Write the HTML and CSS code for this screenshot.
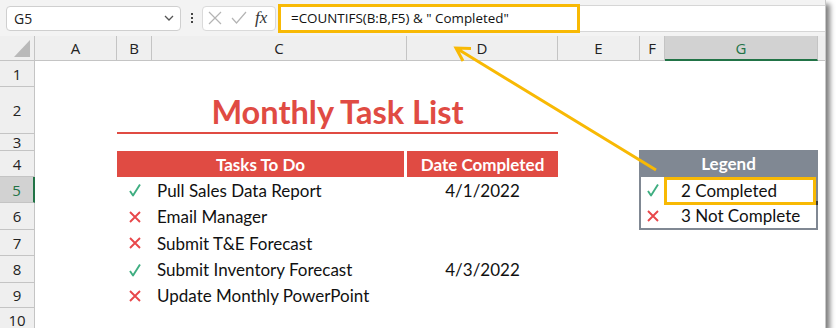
FILE: index.html
```html
<!DOCTYPE html>
<html lang="en">
<head>
  <meta charset="UTF-8">
  <title>Monthly Task List</title>
  <link rel="stylesheet" href="styles.css">
</head>
<body>
  <div class="window">
    <!-- formula bar -->
    <div class="formula-bar">
      <div class="name-box">
        <span>G5</span>
        <svg class="chevron" viewBox="0 0 10 6"><path d="M1 1 L5 5 L9 1"/></svg>
      </div>
      <div class="bar-dots"><i></i><i></i><i></i></div>
      <div class="fx-box">
        <svg class="ui-icon" viewBox="0 0 14 14"><path d="M1 1 L13 13 M13 1 L1 13"/></svg>
        <svg class="ui-icon" viewBox="0 0 16 14"><path d="M1 7 L5.5 12 L15 1"/></svg>
        <span class="fx">fx</span>
      </div>
      <div class="formula">
        <div class="formula-text">=COUNTIFS(B:B,F5) &amp; " Completed"</div>
      </div>
    </div>

    <!-- sheet -->
    <div class="sheet">
      <div class="row col-heads">
        <div class="corner"><span class="corner-tri"></span></div>
        <div class="ch">A</div>
        <div class="ch">B</div>
        <div class="ch">C</div>
        <div class="ch">D</div>
        <div class="ch">E</div>
        <div class="ch">F</div>
        <div class="ch selected">G</div>
        <div class="ch filler"></div>
      </div>

      <div class="row r1"><div class="rh">1</div></div>

      <div class="row r2">
        <div class="rh">2</div>
        <div class="title span-bd">Monthly Task List</div>
      </div>

      <div class="row r3"><div class="rh">3</div></div>

      <div class="row r4">
        <div class="rh">4</div>
        <div class="head span-bc">Tasks To Do</div>
        <div class="head col-d">Date Completed</div>
        <div class="legend-head span-fg">Legend</div>
      </div>

      <div class="row r5">
        <div class="rh selected">5</div>
        <div class="icon col-b"><svg class="check" viewBox="0 0 12 13"><path d="M1 7.5 L4 12 L11 1"/></svg></div>
        <div class="task col-c">Pull Sales Data Report</div>
        <div class="date col-d">4/1/2022</div>
        <div class="icon col-f legend-left"><svg class="check" viewBox="0 0 12 13"><path d="M1 7.5 L4 12 L11 1"/></svg></div>
        <div class="legend-text col-g legend-right active">2 Completed</div>
      </div>

      <div class="row r6">
        <div class="rh">6</div>
        <div class="icon col-b"><svg class="cross" viewBox="0 0 12 12"><path d="M1 1 L11 11 M11 1 L1 11"/></svg></div>
        <div class="task col-c">Email Manager</div>
        <div class="icon col-f legend-left legend-bottom"><svg class="cross" viewBox="0 0 12 12"><path d="M1 1 L11 11 M11 1 L1 11"/></svg></div>
        <div class="legend-text col-g legend-right legend-bottom">3 Not Complete</div>
      </div>

      <div class="row r7">
        <div class="rh">7</div>
        <div class="icon col-b"><svg class="cross" viewBox="0 0 12 12"><path d="M1 1 L11 11 M11 1 L1 11"/></svg></div>
        <div class="task col-c">Submit T&amp;E Forecast</div>
      </div>

      <div class="row r8">
        <div class="rh">8</div>
        <div class="icon col-b"><svg class="check" viewBox="0 0 12 13"><path d="M1 7.5 L4 12 L11 1"/></svg></div>
        <div class="task col-c">Submit Inventory Forecast</div>
        <div class="date col-d">4/3/2022</div>
      </div>

      <div class="row r9">
        <div class="rh">9</div>
        <div class="icon col-b"><svg class="cross" viewBox="0 0 12 12"><path d="M1 1 L11 11 M11 1 L1 11"/></svg></div>
        <div class="task col-c">Update Monthly PowerPoint</div>
      </div>

      <div class="row r10"><div class="rh">10</div></div>
    </div>

    <!-- callout arrow from the formula to the legend cell -->
    <svg class="callout" viewBox="0 0 826 328">
      <path d="M656 170 L456 48 M471 48.5 L456 48 L463 61"/>
    </svg>
  </div>
</body>
</html>
```

FILE: styles.css
```css
* { margin:0; padding:0; box-sizing:border-box; }
html, body { background:#fff; }
body { font-family:"Lato", "Liberation Sans", sans-serif; color:#111; }

.window {
  position: relative;
  width: 826px;
  height: 328px;
  overflow: hidden;
  background: #fff;
  border-right: 1px solid #c8c8c8;
  box-shadow: 4px 4px 5px rgba(0,0,0,0.5);
}

/* ---- formula bar ---- */
.formula-bar {
  height: 36px;
  background: #f3f3f3;
  display: flex;
  align-items: center;
  padding: 0 0 0 6px;
}
.name-box {
  width: 175px; height: 25px;
  background: #fff;
  border: 1px solid #cfcfcf;
  border-radius: 4px;
  display: flex; align-items: center; justify-content: space-between;
  padding: 0 6px 0 7px;
  font-family: "Open Sans", "Noto Sans", sans-serif;
  font-size: 14px; color: #222;
}
.chevron { width: 10px; height: 6px; fill: none; stroke: #555; stroke-width: 1.3; }
.bar-dots { width: 21px; display: flex; flex-direction: column; align-items: center; gap: 2px; }
.bar-dots i { width: 2px; height: 2px; background: #444; display: block; }
.fx-box {
  width: 74px; height: 25px;
  background: #fff;
  border: 1px solid #dadada;
  border-radius: 4px;
  display: flex; align-items: center; gap: 9px;
  padding-left: 5px;
}
.ui-icon { width: 14px; height: 14px; fill: none; stroke: #b4b4b4; stroke-width: 1.2; }
.ui-icon:nth-child(2) { width: 16px; }
.fx { font-family: "Liberation Serif", serif; font-style: italic; font-size: 17px; color: #333; margin-left: -1px; }
.formula {
  flex: 1;
  height: 27px;
  margin-left: 2px;
  background: #fff;
  border: 1px solid #d6d6d6;
  border-right: none;
  display: flex; align-items: center;
}
.formula-text {
  width: 302px; height: 29px;
  margin-left: -1px;
  border: 3px solid #f8b904;
  display: flex; align-items: center;
  padding-left: 10px;
  font-family: "Open Sans", "Noto Sans", sans-serif;
  font-size: 13.4px; color: #111;
}

/* ---- sheet ---- */
.sheet { display: flex; flex-direction: column; }
.row {
  display: grid;
  grid-template-columns: 35px 82px 35px 255px 151px 82px 25px 153px 8px;
  height: 26px;
}
.col-heads { height: 25px; background: #efefef; border-bottom: 1px solid #c4c4c4; }
.r1 { height: 26px; }
.r2 { height: 47px; }
.r3 { height: 17px; }
.r4 { height: 26px; }
.r5 { height: 26px; }
.r6 { height: 27px; }
.r7 { height: 26px; }
.r8 { height: 27px; }
.r9 { height: 25px; }
.r10 { height: 20px; }

.corner { position: relative; border-right: 1px solid #c4c4c4; }
.corner-tri {
  position: absolute; right: 4px; bottom: 3px;
  width: 0; height: 0;
  border-left: 16px solid transparent;
  border-bottom: 17px solid #b9b9b9;
}
.ch, .rh {
  display: flex; align-items: center; justify-content: center;
  font-family: "Open Sans", "Noto Sans", sans-serif;
  font-size: 15px; color: #222;
}
.ch { border-right: 1px solid #c4c4c4; }
.ch.filler { border-right: none; }
.ch.selected { background: #d2d2d2; color: #217346; border-bottom: 2px solid #217346; margin-bottom: -1px; }
.rh { grid-column: 1; background: #efefef; border-right: 1px solid #c4c4c4; border-bottom: 1px solid #c4c4c4; }
.rh.selected { background: #d2d2d2; color: #217346; border-right: 2px solid #217346; }
.r3 .rh { align-items: flex-end; line-height: 1; overflow: hidden; }
.r10 .rh { align-items: flex-start; padding-top: 2px; border-bottom: none; }

.col-b { grid-column: 3; }
.col-c { grid-column: 4; }
.col-d { grid-column: 5; }
.col-f { grid-column: 7; }
.col-g { grid-column: 8; }
.span-bc { grid-column: 3 / 5; }
.span-bd { grid-column: 3 / 6; }
.span-fg { grid-column: 7 / 9; }

/* ---- content ---- */
.title {
  display: flex; align-items: center; justify-content: center;
  border-bottom: 2px solid #e04b43;
  color: #e04b43;
  font-weight: 700; font-size: 32.5px;
  padding-top: 3px;
}
.head {
  display: flex; align-items: center; justify-content: center;
  background: #e04b43; color: #fff;
  font-weight: 700; font-size: 17px;
}
.head.span-bc { border-right: 2px solid #fff; margin-right: 1px; }
.legend-head {
  display: flex; align-items: center; justify-content: center;
  background: #808893; color: #fff;
  font-weight: 700; font-size: 17px;
  margin: -1px 0 0 -1px;
  height: 27px;
}
.icon { display: flex; align-items: center; justify-content: center; }
.check { width: 12px; height: 14px; fill: none; stroke: #3fae81; stroke-width: 1.9; stroke-linejoin: round; }
.cross { width: 12px; height: 12px; fill: none; stroke: #e8474a; stroke-width: 1.9; }
.task { display: flex; align-items: center; padding-left: 5px; font-size: 17px; white-space: nowrap; }
.date { display: flex; align-items: center; justify-content: center; font-size: 17px; }

.legend-text { display: flex; align-items: center; padding-left: 16px; font-size: 17px; white-space: nowrap; }
.legend-left { border-left: 2px solid #808893; margin-left: -1px; }
.legend-right { border-right: 2px solid #808893; }
.legend-bottom { border-bottom: 2px solid #808893; }
.legend-text.active { position: relative; }
.legend-text.active::after {
  content: "";
  position: absolute;
  left: -1px; right: 0; top: 0; bottom: -2px;
  border: 3px solid #f8b904;
}
.legend-text.active::before {
  content: "";
  position: absolute;
  right: -2px; bottom: -2px;
  width: 4px; height: 4px;
  background: #3a3a3a;
}

/* ---- callout arrow ---- */
.callout {
  position: absolute; left: 0; top: 0;
  width: 826px; height: 328px;
  pointer-events: none;
  fill: none; stroke: #f8b904; stroke-width: 3;
}
```
